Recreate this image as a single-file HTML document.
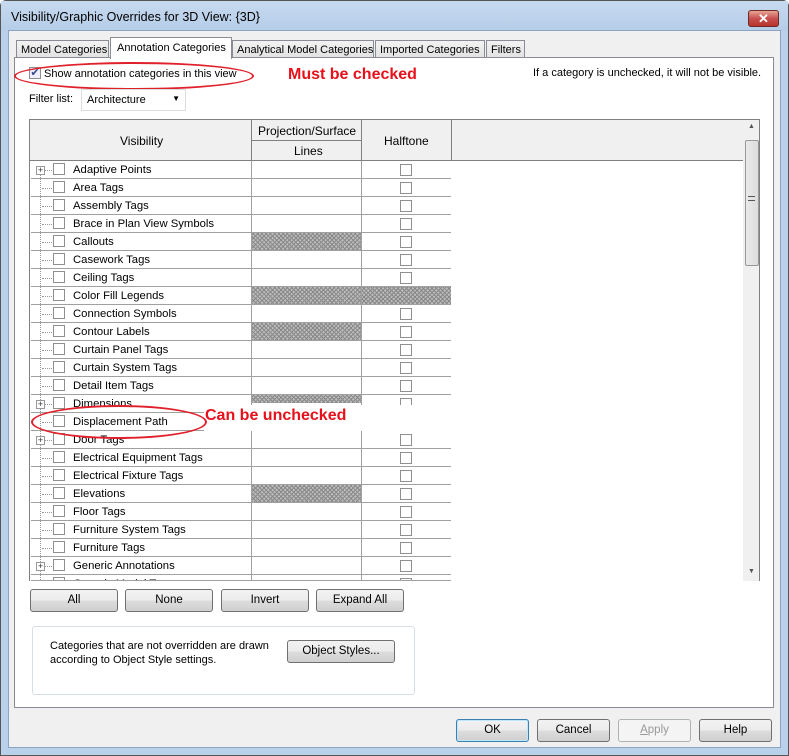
<!DOCTYPE html>
<html><head><style>
*{margin:0;padding:0;box-sizing:border-box}
body{width:789px;height:756px;overflow:hidden;background:#fff;font-family:"Liberation Sans",sans-serif;font-size:12px;color:#000;position:relative}
.a{position:absolute;white-space:nowrap}
.btn{position:absolute;height:23px;border:1px solid #707070;border-radius:3px;background:linear-gradient(#f2f2f2 0%,#ebebeb 50%,#dddddd 51%,#cfcfcf 100%);text-align:center;line-height:21px;font-size:11.5px}
.cb{position:absolute;width:12px;height:12px;border:1px solid #8e8f8f;background:#fff}
.hatch{position:absolute;background-color:#bdbdbd;background-image:repeating-linear-gradient(45deg,#888 0 1px,transparent 1px 3px),repeating-linear-gradient(-45deg,#888 0 1px,transparent 1px 3px)}
.row{position:absolute;left:31px;width:420px;height:18px;border-bottom:1px solid #a0a0a0}
.t{position:absolute;left:42px;top:3px;font-size:11.3px;white-space:nowrap}
.hl{position:absolute;top:0;height:18px;border-left:1px solid #a0a0a0}
.tab{position:absolute;top:40px;height:18px;border:1px solid #898c95;background:linear-gradient(#f2f2f2,#e3e3e3);font-size:11px;padding:3px 0 0 4px;white-space:nowrap;overflow:hidden}
</style></head><body>
<div class="a" style="left:0;top:0;width:789px;height:756px;background:#b9d1ea;border:1px solid #555;border-radius:6px 6px 0 0"></div>
<div class="a" style="left:1px;top:1px;width:787px;height:30px;background:linear-gradient(#c7daef,#b5cde8)"></div>
<div class="a" style="left:11px;top:10px;font-size:12.5px">Visibility/Graphic Overrides for 3D View: {3D}</div>
<div class="a" style="left:748px;top:10px;width:31px;height:17px;border:1px solid #6d2b26;border-radius:3px;background:linear-gradient(#e8a593,#c75050 50%,#b8332b);color:#fff;font-weight:bold;text-align:center;line-height:15px;font-size:13px">✕</div>
<div class="a" style="left:8px;top:30px;width:773px;height:718px;background:#f0f0f0;border:1px solid #8aa4c2"></div>
<div class="tab" style="left:16px;width:93px">Model Categories</div>
<div class="a" style="left:110px;top:37px;width:122px;height:22px;border:1px solid #898c95;border-bottom:none;background:#fff;font-size:11px;padding:4px 0 0 6px;z-index:2">Annotation Categories</div>
<div class="tab" style="left:232px;width:142px">Analytical Model Categories</div>
<div class="tab" style="left:375px;width:110px">Imported Categories</div>
<div class="tab" style="left:486px;width:39px">Filters</div>
<div class="a" style="left:14px;top:57px;width:760px;height:651px;background:#fff;border:1px solid #898c95"></div>
<div class="a" style="left:29px;top:67px;width:12px;height:12px;border:1px solid #8e8f8f;background:#eef;color:#3a4a8c;font-size:11px;line-height:10px;text-align:center">✔</div>
<div class="a" style="left:44px;top:68px;font-size:11px">Show annotation categories in this view</div>
<div class="a" style="left:14px;top:62px;width:240px;height:28px;border:2px solid #e0202a;border-radius:50%"></div>
<div class="a" style="left:288px;top:66px;font-size:16px;font-weight:bold;color:#e8101a">Must be checked</div>
<div class="a" style="left:533px;top:67px;font-size:11px">If a category is unchecked, it will not be visible.</div>
<div class="a" style="left:29px;top:93px;font-size:11px">Filter list:</div>
<div class="a" style="left:81px;top:89px;width:105px;height:22px;border:1px solid #dcdcdc;background:#fff;font-size:11px;padding:4px 0 0 5px">Architecture<span style="position:absolute;right:5px;top:4px;font-size:8px">▼</span></div>
<div class="a" style="left:29px;top:119px;width:731px;height:462px;border:1px solid #808080;border-bottom:none;background:#fff;overflow:hidden">
<div class="a" style="left:0;top:0;width:713px;height:41px;background:#f0f0f0;border-bottom:1px solid #808080"></div>
<div class="a" style="left:221px;top:0;height:41px;border-left:1px solid #808080"></div>
<div class="a" style="left:331px;top:0;height:41px;border-left:1px solid #808080"></div>
<div class="a" style="left:421px;top:0;height:41px;border-left:1px solid #808080"></div>
<div class="a" style="left:221px;top:20px;width:110px;border-top:1px solid #808080"></div>
<div class="a" style="left:90px;top:14px;font-size:12px">Visibility</div>
<div class="a" style="left:228px;top:4px;font-size:12px">Projection/Surface</div>
<div class="a" style="left:264px;top:24px;font-size:12px">Lines</div>
<div class="a" style="left:354px;top:14px;font-size:12px">Halftone</div>
<div class="a" style="left:713px;top:0;width:17px;height:462px;background:#f0f0f0"></div>
<div class="a" style="left:718px;top:3px;font-size:7px;color:#555">▲</div>
<div class="a" style="left:715px;top:20px;width:14px;height:126px;border:1px solid #999;border-radius:2px;background:linear-gradient(90deg,#eaeaea,#dcdcdc)"></div>
<div class="a" style="left:718px;top:76px;width:7px;height:5px;border-top:1px solid #555;border-bottom:1px solid #555"></div>
<div class="a" style="left:718px;top:448px;font-size:7px;color:#555">▼</div>
<div class="a" style="left:10px;top:50px;height:412px;border-left:1px dotted #999"></div>
</div>
<div id="rows"></div>
<div class="a" style="left:204px;top:405px;width:248px;height:26px;background:#fff"></div>
<div class="a" style="left:31px;top:405px;width:176px;height:34px;border:2px solid #e0202a;border-radius:50%"></div>
<div class="a" style="left:205px;top:407px;font-size:16px;font-weight:bold;color:#e8101a">Can be unchecked</div>
<div class="btn" style="left:30px;top:589px;width:88px">All</div>
<div class="btn" style="left:125px;top:589px;width:88px">None</div>
<div class="btn" style="left:221px;top:589px;width:88px">Invert</div>
<div class="btn" style="left:316px;top:589px;width:88px">Expand All</div>
<div class="a" style="left:32px;top:626px;width:383px;height:69px;border:1px solid #d5dfe5;border-radius:3px"></div>
<div class="a" style="left:50px;top:639px;font-size:11px;line-height:14px">Categories that are not overridden are drawn<br>according to Object Style settings.</div>
<div class="btn" style="left:287px;top:640px;width:108px">Object Styles...</div>
<div class="btn" style="left:456px;top:719px;width:73px;border-color:#3c7fb1;box-shadow:inset 0 0 0 1px #bde7ff">OK</div>
<div class="btn" style="left:537px;top:719px;width:73px">Cancel</div>
<div class="btn" style="left:618px;top:719px;width:73px;color:#999;border-color:#adb2b5;background:#f4f4f4"><u>A</u>pply</div>
<div class="btn" style="left:699px;top:719px;width:73px">Help</div>
<script>
var names=["Adaptive Points","Area Tags","Assembly Tags","Brace in Plan View Symbols","Callouts","Casework Tags","Ceiling Tags","Color Fill Legends","Connection Symbols","Contour Labels","Curtain Panel Tags","Curtain System Tags","Detail Item Tags","Dimensions","Displacement Path","Door Tags","Electrical Equipment Tags","Electrical Fixture Tags","Elevations","Floor Tags","Furniture System Tags","Furniture Tags","Generic Annotations","Generic Model Tags"];
var plus={0:1,13:1,15:1,22:1};
var hatch={4:1,7:1,9:1,13:1,18:1};
var h='';
names.forEach(function(n,i){
 var top=161+i*18;
 var hgt=Math.min(18,581-top);
 h+='<div class="row" style="top:'+top+'px;height:'+hgt+'px;overflow:hidden">';
 h+='<div class="hl" style="left:220px"></div><div class="hl" style="left:330px"></div><div class="hl" style="left:420px"></div>';
 h+='<div class="a" style="left:11px;top:9px;width:10px;border-top:1px dotted #999"></div>';
 if(plus[i])h+='<div class="a" style="left:5px;top:5px;width:9px;height:9px;border:1px solid #999;background:#fff;font-size:9px;line-height:7px;text-align:center;color:#333">+</div>';
 h+='<div class="cb" style="left:22px;top:2px"></div>';
 h+='<div class="t">'+n+'</div>';
 if(hatch[i])h+='<div class="hatch" style="left:221px;top:0;width:109px;height:'+(i==13?8:17)+'px"></div>';
 if(i==7)h+='<div class="hatch" style="left:331px;top:0;width:89px;height:17px"></div>';
 else h+='<div class="cb" style="left:369px;top:3px"></div>';
 h+='</div>';
});
document.getElementById('rows').innerHTML=h;
</script>
</body></html>
